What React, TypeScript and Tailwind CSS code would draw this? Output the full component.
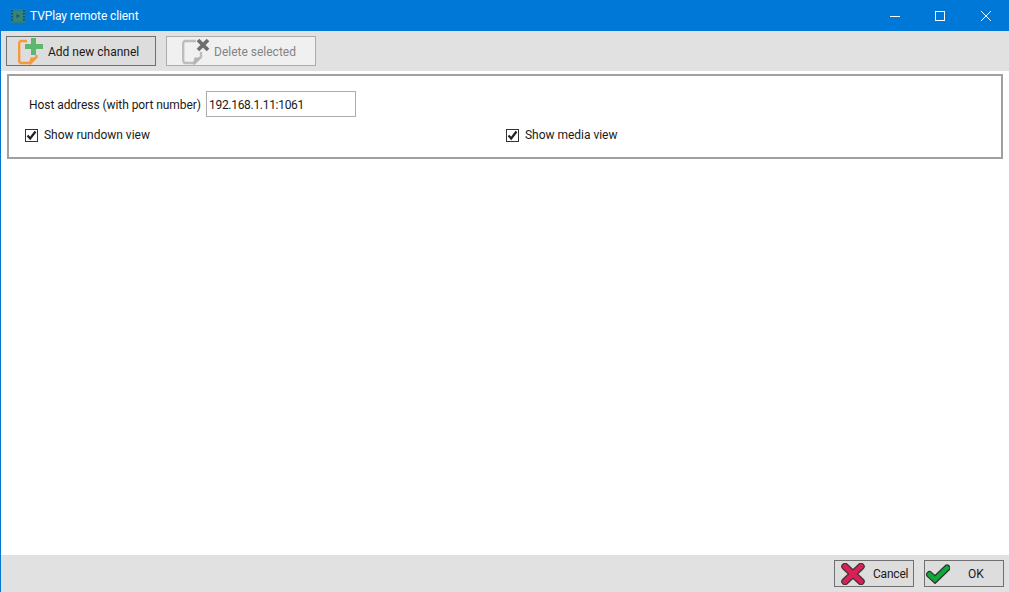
function AddIcon() {
  return (
    <svg width="28" height="28" viewBox="0 0 28 28" fill="none">
      <path d="M9 4H3.5C2 4 1.2 5 1.2 6.5V23.5C1.2 25 2 26 3.5 26H11.5L18.5 20V18" stroke="#f59a3c" strokeWidth="2.4" />
      <path d="M11 27L12.5 20.5H19.5L12.5 28Z" fill="#f59a3c" />
      <path d="M15.5 1V18M7 9.5H25" stroke="#5cb870" strokeWidth="5" />
    </svg>
  );
}

function DeleteIcon() {
  return (
    <svg width="28" height="28" viewBox="0 0 28 28" fill="none">
      <path d="M14 4H3.5C2 4 1.2 5 1.2 6.5V23.5C1.2 25 2 26 3.5 26H11.5L19 20V15" stroke="#bdbdbd" strokeWidth="2.4" />
      <path d="M11 27L12.5 20.5H20L12.5 28Z" fill="#b5b5b5" />
      <path d="M16 3L26 13M26 3L16 13" stroke="#6e6e6e" strokeWidth="3.8" />
    </svg>
  );
}

function TvIcon() {
  return (
    <svg width="16" height="16" viewBox="0 0 16 16">
      <rect x="1" y="1" width="14" height="14" fill="#2b7f86" />
      <rect x="4" y="3" width="8" height="10" fill="#3a8473" />
      <path d="M2 2V14M14 2V14" stroke="#11527a" strokeWidth="2" strokeDasharray="1.5 1.5" />
      <path d="M6.5 6L10 8L6.5 10Z" fill="#14586e" />
    </svg>
  );
}

function CancelIcon() {
  return (
    <svg width="24" height="22" viewBox="0 0 24 22">
      <path d="M4 3.5L20 18.5M20 3.5L4 18.5" stroke="#3a3a3a" strokeWidth="7.5" strokeLinecap="round" />
      <path d="M4 3.5L20 18.5M20 3.5L4 18.5" stroke="#dc1f55" strokeWidth="5" strokeLinecap="round" />
    </svg>
  );
}

function OkIcon() {
  return (
    <svg width="24" height="20" viewBox="0 0 24 20">
      <path d="M3.5 10.5L9 15.5L21 4" fill="none" stroke="#333333" strokeWidth="7" strokeLinecap="round" />
      <path d="M3.5 10.5L9 15.5L21 4" fill="none" stroke="#10a83a" strokeWidth="4.5" strokeLinecap="round" />
    </svg>
  );
}

function WindowControls() {
  return (
    <div className="ml-auto flex items-center pr-[18px]">
      <svg width="10" height="10" viewBox="0 0 10 10" className="mr-[35px]">
        <path d="M0 5.5H10" stroke="white" />
      </svg>
      <svg width="10" height="10" viewBox="0 0 10 10" className="mr-[36px]">
        <rect x="0.5" y="0.5" width="9" height="9" fill="none" stroke="white" />
      </svg>
      <svg width="10" height="10" viewBox="0 0 10 10">
        <path d="M0 0L10 10M10 0L0 10" stroke="white" />
      </svg>
    </div>
  );
}

function CheckField({ label }: { label: string }) {
  return (
    <label className="flex items-center gap-[6px] tracking-[-0.02px]">
      <span className="flex h-[13px] w-[13px] items-center justify-center border border-[#333333] bg-white">
        <svg width="11" height="11" viewBox="0 0 11 11">
          <path d="M1.5 5.5L4.2 8.5L9.5 1.5" fill="none" stroke="#222222" strokeWidth="2.2" />
        </svg>
      </span>
      <span>{label}</span>
    </label>
  );
}

export default function App() {
  return (
    <div
      className="flex h-[592px] w-[1009px] flex-col overflow-hidden border-l border-[#0078d7] bg-white text-[12px] text-[#1a1a1a]"
      style={{ fontFamily: 'Roboto, sans-serif' }}
    >
      <div className="-ml-px flex h-[31px] shrink-0 items-center bg-[#0078d7] pl-[10px] text-white">
        <TvIcon />
        <span className="ml-[4px] tracking-[-0.1px]">TVPlay remote client</span>
        <WindowControls />
      </div>

      <div className="flex h-[40px] shrink-0 items-center gap-[10px] bg-[#e1e1e1] pl-[5px]">
        <button className="flex h-[30px] w-[150px] items-center border border-[#707070] bg-[#dddddd] pl-[11px]">
          <AddIcon />
          <span className="ml-[2px] pt-[2px]">Add new channel</span>
        </button>
        <button className="flex h-[30px] w-[150px] items-center border border-[#adadad] bg-[#f0f0f0] pl-[15px] text-[#838383]">
          <DeleteIcon />
          <span className="ml-[4px] pt-[2px]">Delete selected</span>
        </button>
      </div>

      <div className="mt-[3px] mr-[6px] ml-[6px] h-[85px] shrink-0 border-2 border-[#a0a0a0] pt-[15px] pl-[16px]">
        <div className="flex items-center pl-[4px]">
          <span className="w-[172px] pt-[2px] tracking-[-0.06px] whitespace-nowrap">Host address (with port number)</span>
          <div className="ml-[5px] flex h-[26px] w-[150px] items-center border border-[#ababab] pt-[1px] pl-[2px] tracking-[-0.3px]">192.168.1.11:1061</div>
        </div>
        <div className="mt-[9px] grid grid-cols-[481px_1fr]">
          <CheckField label="Show rundown view" />
          <CheckField label="Show media view" />
        </div>
      </div>

      <div className="flex-1" />

      <div className="flex h-[37px] shrink-0 items-center justify-end gap-[10px] bg-[#e1e1e1] pr-[5px]">
        <button className="flex h-[27px] w-[80px] items-center border border-[#707070] bg-[#dddddd] pl-[6px]">
          <CancelIcon />
          <span className="ml-[8px] tracking-[-0.2px]">Cancel</span>
        </button>
        <button className="flex h-[27px] w-[80px] items-center border border-[#707070] bg-[#dddddd] pl-[1px]">
          <OkIcon />
          <span className="ml-[18px]">OK</span>
        </button>
      </div>
    </div>
  );
}
